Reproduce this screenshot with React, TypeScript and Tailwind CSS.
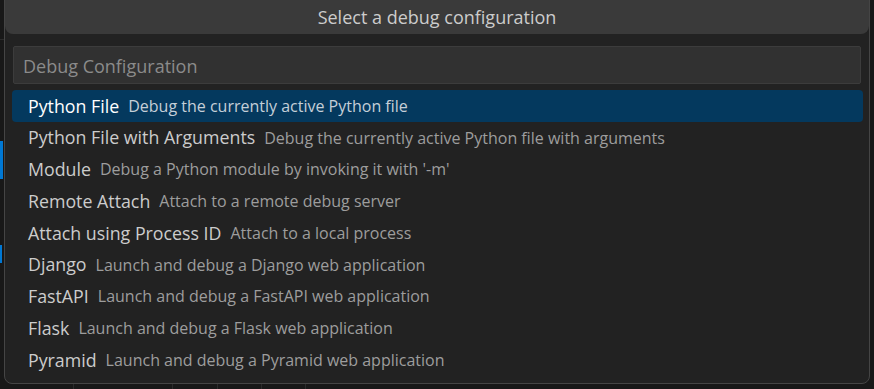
import React from "react";

const items: { label: string; desc: string }[] = [
  { label: "Python File", desc: "Debug the currently active Python file" },
  { label: "Python File with Arguments", desc: "Debug the currently active Python file with arguments" },
  { label: "Module", desc: "Debug a Python module by invoking it with '-m'" },
  { label: "Remote Attach", desc: "Attach to a remote debug server" },
  { label: "Attach using Process ID", desc: "Attach to a local process" },
  { label: "Django", desc: "Launch and debug a Django web application" },
  { label: "FastAPI", desc: "Launch and debug a FastAPI web application" },
  { label: "Flask", desc: "Launch and debug a Flask web application" },
  { label: "Pyramid", desc: "Launch and debug a Pyramid web application" },
];

export default function App() {
  return (
    <div
      className="relative w-[874px] h-[389px] overflow-hidden bg-[#181818] flex"
      style={{ fontFamily: '"Open Sans", "Noto Sans", sans-serif' }}
    >
      {/* background: activity bar edge + editor */}
      <div className="w-[4px] flex flex-col">
        <div className="h-[40px] border-b border-[#2b2b2b]" />
        <div className="h-[101px]" />
        <div className="h-[38px] w-[3px] bg-[#0078d4]" />
        <div className="h-[66px]" />
        <div className="h-[18px] w-[2px] bg-[#0078d4]" />
      </div>
      <div className="flex-1 flex flex-col justify-end">
        <div className="h-[6px] flex">
          <div className="w-[70px] border-r border-[#2b2b2b]" />
          <div className="w-[99px] border-r border-[#2b2b2b]" />
          <div className="w-[45px] border-r border-[#2b2b2b]" />
          <div className="w-[44px] border-r border-[#2b2b2b]" />
          <div className="w-[44px] border-r border-[#2b2b2b]" />
        </div>
      </div>

      {/* quick pick overlay */}
      <div className="absolute left-[4px] top-[-8px] w-[866px] h-[392px] rounded-[8px] border border-[#454545] bg-[#222222] flex flex-col overflow-hidden">
        <div className="shrink-0 h-[41px] pt-[8px] rounded-[8px] bg-[#3a3a3a] flex items-center justify-center text-[18px] text-[#cccccc]">
          Select a debug configuration
        </div>
        <div className="shrink-0 pl-[8px] pr-[8px] pt-[12px]">
          <div className="h-[38px] rounded-[2px] border border-[#3c3c3c] bg-[#313131] flex items-center px-[9px] pt-[2px] text-[18px] text-[#8b8b8b]">
            Debug Configuration
          </div>
        </div>
        <div className="shrink-0 pl-[7px] pr-[6px] pt-[6px] flex flex-col">
          {items.map((it, i) => (
            <div
              key={it.label}
              className={
                "shrink-0 h-[31.75px] flex items-center pl-[16px] rounded-[4px] whitespace-nowrap " +
                (i === 0 ? "bg-[#04395e]" : "")
              }
            >
              <span className={"text-[17.8px] " + (i === 0 ? "text-[#ffffff]" : "text-[#cccccc]")}>{it.label}</span>
              <span className={"ml-[9px] text-[16px] " + (i === 0 ? "text-[#c5cfd8]" : "text-[#9d9d9d]")}>{it.desc}</span>
            </div>
          ))}
        </div>
      </div>
    </div>
  );
}
